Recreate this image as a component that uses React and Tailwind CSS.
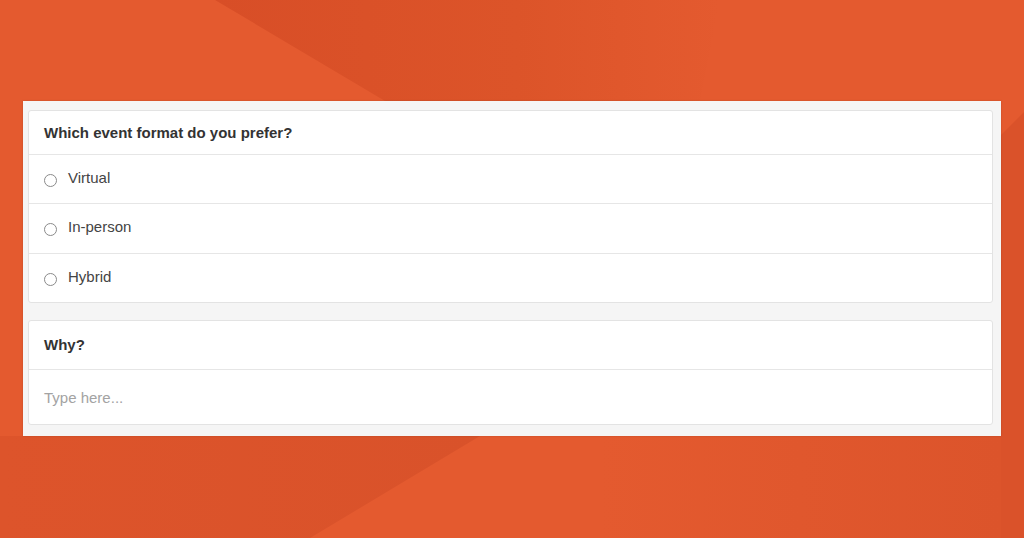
import React from "react";

function Radio() {
  return (
    <span className="inline-block w-[13px] h-[13px] rounded-full border border-[#8a8a8a] bg-white shrink-0" />
  );
}

export default function App() {
  const options = ["Virtual", "In-person", "Hybrid"];
  return (
    <div className="relative w-[1024px] h-[538px] overflow-hidden bg-[#e45a2f] font-['Liberation_Sans',Arial,sans-serif]">
      <svg className="absolute inset-0" width="1024" height="538" viewBox="0 0 1024 538">
        <defs>
          <linearGradient id="gt" x1="0" y1="0" x2="1" y2="0">
            <stop offset="0" stopColor="#d84e27" />
            <stop offset="0.6" stopColor="#dc5429" />
            <stop offset="1" stopColor="#e45a2f" />
          </linearGradient>
          <linearGradient id="gb" x1="0" y1="0" x2="1" y2="0">
            <stop offset="0" stopColor="#dd542b" />
            <stop offset="1" stopColor="#d9522a" />
          </linearGradient>
          <linearGradient id="gr" x1="0" y1="0" x2="1" y2="0">
            <stop offset="0" stopColor="#e45a2f" />
            <stop offset="1" stopColor="#dc542b" />
          </linearGradient>
        </defs>
        <rect width="1024" height="538" fill="#e45a2f" />
        <polygon points="330,0 720,0 700,101 385,101 215,0" fill="url(#gt)" />
        <polygon points="0,436 480,436 310,538 0,538" fill="url(#gb)" />
        <polygon points="600,436 1001,436 1001,538 600,538" fill="url(#gr)" />
        <polygon points="1001,135 1024,112 1024,538 1001,538" fill="#da522a" />
      </svg>
      <div className="relative pt-[101px] pl-[23px]">
        <div className="w-[978px] h-[335px] bg-[#f5f5f5] pt-[9px] pl-[5px] pr-[8px] flex flex-col gap-[17px] shadow-[0_0_2px_rgba(0,0,0,0.15)]">
          <div className="h-[193px] bg-white border border-[#e3e3e3] rounded-[3px] flex flex-col">
            <div className="h-[44px] flex items-center px-[15px] border-b border-[#e6e6e6]">
              <span className="text-[15px] font-bold text-[#333] pt-[2px]">Which event format do you prefer?</span>
            </div>
            {options.map((o, i) => (
              <div
                key={o}
                className={`flex-1 flex items-center gap-[11px] px-[15px] ${i < 2 ? "border-b border-[#e6e6e6]" : ""}`}
              >
                <span className="pt-[3px] flex"><Radio /></span>
                <span className="text-[15px] text-[#444] pb-[2px]">{o}</span>
              </div>
            ))}
          </div>
          <div className="h-[105px] bg-white border border-[#e3e3e3] rounded-[3px] flex flex-col">
            <div className="h-[49px] flex items-center px-[15px] border-b border-[#e6e6e6]">
              <span className="text-[15px] font-bold text-[#333]">Why?</span>
            </div>
            <div className="flex-1 flex items-center px-[15px]">
              <span className="text-[15px] text-[#a3a3a3] pt-[2px]">Type here...</span>
            </div>
          </div>
        </div>
      </div>
    </div>
  );
}
